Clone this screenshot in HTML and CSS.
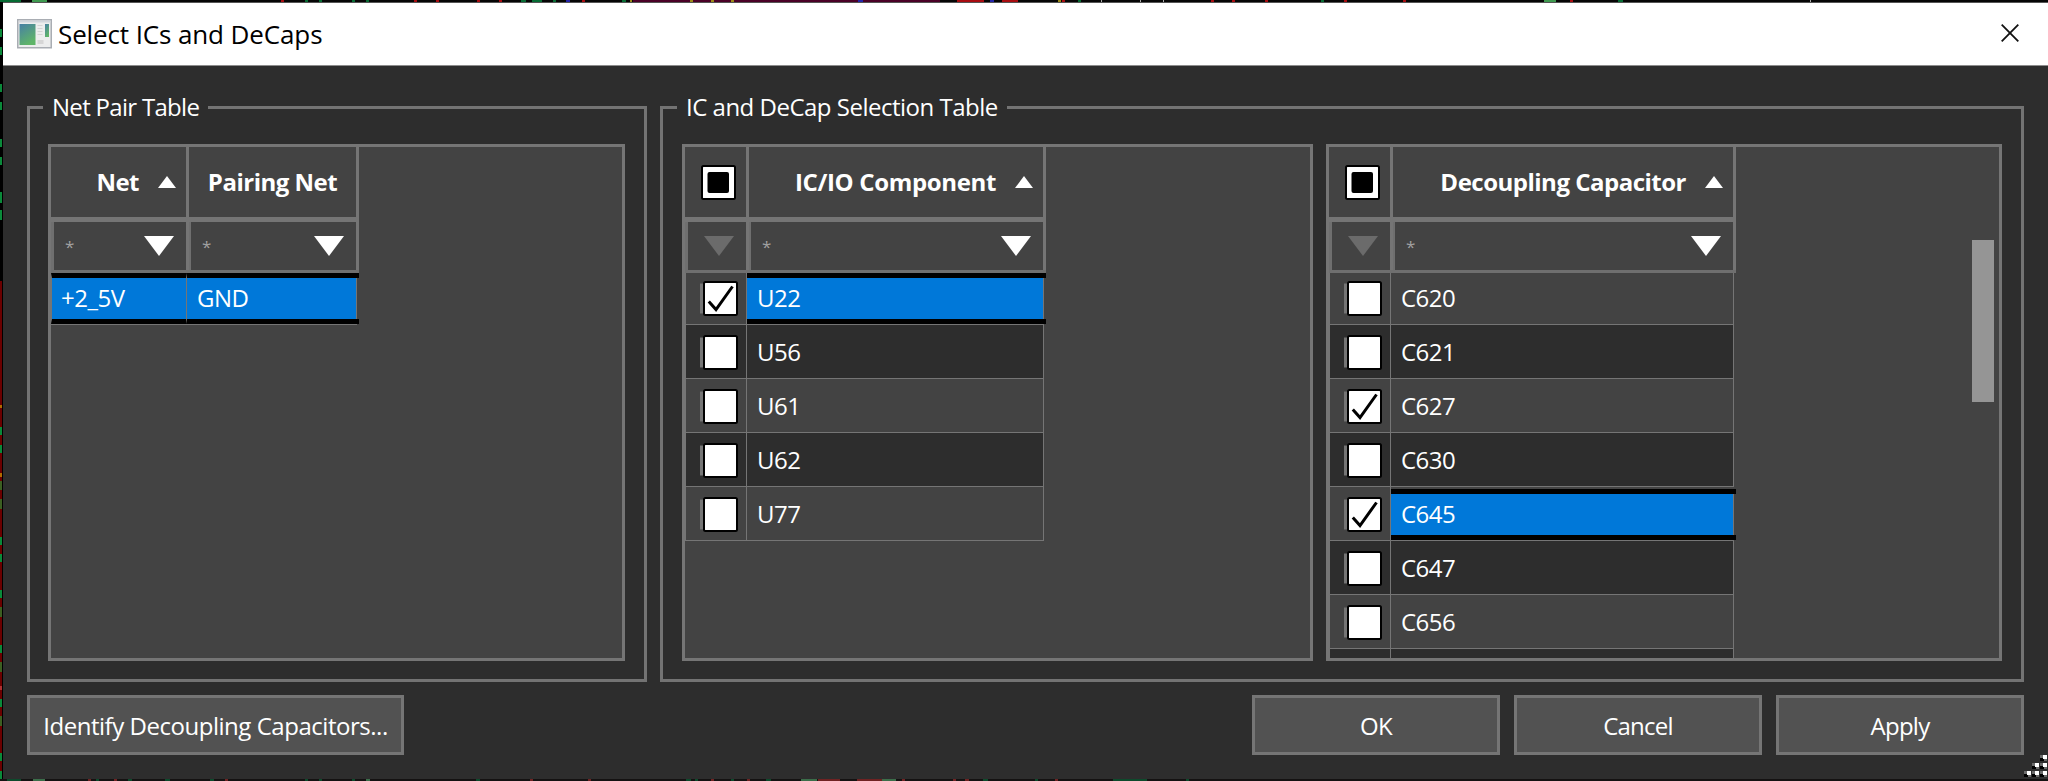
FILE: index.html
```html
<!DOCTYPE html>
<html lang="en">
<head>
    <meta charset="UTF-8">
    <title>Select ICs and DeCaps</title>
    <link rel="stylesheet" href="styles.css">
</head>
<body>
    <!-- shared icons -->
    <svg width="0" height="0" class="defs">
        <symbol id="box" viewBox="0 0 38 35">
            <rect x="0" y="2.5" width="3" height="30" fill="#757575"/>
            <rect x="4" y="1" width="33" height="33" rx="1.5" fill="#fff" stroke="#000" stroke-width="2"/>
        </symbol>
        <symbol id="box-checked" viewBox="0 0 38 35">
            <use href="#box" width="38" height="35"/>
            <path d="M8.8 20.5L16 28.5L32.5 5.5" fill="none" stroke="#000" stroke-width="3"/>
        </symbol>
        <symbol id="box-partial" viewBox="0 0 35 35">
            <rect x="1" y="1" width="33" height="33" rx="1.5" fill="#fff" stroke="#000" stroke-width="2"/>
            <rect x="6.5" y="7" width="21.5" height="21" rx="2" fill="#000"/>
        </symbol>
        <symbol id="sort" viewBox="0 0 18 12"><path d="M9 0L18 12H0Z" fill="#fff"/></symbol>
        <symbol id="down" viewBox="0 0 30 20"><path d="M0 0H30L15 20Z" fill="currentColor"/></symbol>
        <symbol id="dot" viewBox="0 0 7 6">
            <rect x="0" y="0" width="7" height="6" fill="#6b6b6b"/>
            <rect x="0" y="3" width="4" height="3" fill="#000"/>
            <rect x="3" y="0" width="4" height="4" fill="#fff"/>
        </symbol>
    </svg>

    <svg class="strip-top" width="2048" height="3">
        <rect width="2048" height="3" fill="#050505"/>
        <path d="M0 1H21M305 1h3M319 1h3M352 1h3M366 1h3M521 1h5M532 1h10M553 1h3M622 1h4M1078 1h3M1321 1h3M1618 1h5" stroke="#066b33" stroke-width="2"/>
        <path d="M32 1H47M1544 1h12" stroke="#3f9a50" stroke-width="2"/>
        <path d="M633 1H940" stroke="#4a0026" stroke-width="2"/>
        <path d="M281 1h3M414 1h3M436 1h3M477 1h3M499 1h3M582 1h3M957 1h27M1002 1h16M1062 1h3M1211 1h3M1232 1h3M1265 1h3M1344 1h3M1403 1h3M1570 1h3" stroke="#a80c10" stroke-width="2"/>
        <path d="M566 1h4M858 1h5M990 1h4" stroke="#2323a8" stroke-width="2"/>
        <path d="M630 1h2M690 1h3M711 1h3M731 1h3M1058 1h3" stroke="#9c8b18" stroke-width="2"/>
        <path d="M1101 1h1M1140 1h1M1163 1h1M1810 1h1" stroke="#aaa" stroke-width="2"/>
        <path d="M3 2.5H2048" stroke="#555"/>
    </svg>
    <div class="middle">
        <svg class="strip-left" width="3" height="776">
            <rect width="3" height="776" fill="#000"/>
            <rect y="278" width="2" height="498" fill="#6b0000"/>
            <path d="M1 26v8M1 44v8M1 81v8M1 99v8M1 136v8M1 154v8M1 189v11M1 207v10M1 424v8M1 442v8M1 534v8M1 551v8M1 587v8M1 642v8M1 696v8M1 750v8M1 768v8" stroke="#0a8a3a" stroke-width="2"/>
            <path d="M1 478v9M1 496v10M1 604v10M1 659v10M1 713v10" stroke="#3c5f22" stroke-width="2"/>
            <path d="M1 402v3M1 470v4" stroke="#b06a00" stroke-width="2"/>
            <path d="M1 683v4" stroke="#b03030" stroke-width="2"/>
        </svg>

        <div class="window">
            <div class="title-bar">
                <svg width="35" height="30" viewBox="0 0 35 30">
                    <defs>
                        <linearGradient id="screen" x1="0" y1="0" x2="0.5" y2="1">
                            <stop offset="0" stop-color="#477fa5"/>
                            <stop offset="1" stop-color="#5fb568"/>
                        </linearGradient>
                    </defs>
                    <rect x="0.75" y="0.75" width="33.5" height="28" fill="#eceded" stroke="#a9adb3" stroke-width="1.5"/>
                    <path d="M1.5 2.5H33.5" stroke="#d2d6dc" stroke-width="2"/>
                    <rect x="2.5" y="5" width="16" height="21" fill="url(#screen)"/>
                    <path d="M20.5 6.5h5M20.5 9.5h5M20.5 12.5h5M20.5 15.5h5" stroke="#d3d3d3"/>
                    <rect x="20.5" y="21" width="6" height="4" fill="#d6d6d6"/>
                    <rect x="28" y="5" width="4" height="13" fill="url(#screen)"/>
                </svg>
                <span class="title">Select ICs and DeCaps</span>
                <svg class="close" width="18" height="18" viewBox="0 0 18 18"><path d="M0.7 0.7L17.3 17.3M17.3 0.7L0.7 17.3" stroke="#111" stroke-width="1.8"/></svg>
            </div>

            <div class="groups">
                <fieldset class="net-group">
                    <legend class="tight">Net Pair Table</legend>
                    <div class="panel net-table">
                        <div class="row header">
                            <div class="c1"><span class="sorted">Net</span><svg width="18" height="12"><use href="#sort"/></svg></div>
                            <div class="c2 centered"><span>Pairing Net</span></div>
                        </div>
                        <div class="row filter">
                            <div class="c1"><span>*</span><svg width="30" height="20"><use href="#down"/></svg></div>
                            <div class="c2"><span>*</span><svg width="30" height="20"><use href="#down"/></svg></div>
                        </div>
                        <div class="row first">
                            <div class="c1 selected">+2_5V</div>
                            <div class="c2 selected last">GND</div>
                        </div>
                    </div>
                </fieldset>

                <fieldset class="ic-group">
                    <legend>IC and DeCap Selection Table</legend>
                    <div class="panel ic-table">
                        <div class="row header">
                            <div class="c1 check"><svg width="35" height="35"><use href="#box-partial"/></svg></div>
                            <div class="c2"><span class="sorted wide">IC/IO Component</span><svg width="18" height="12"><use href="#sort"/></svg></div>
                        </div>
                        <div class="row filter">
                            <div class="c1 disabled"><svg width="30" height="20"><use href="#down"/></svg></div>
                            <div class="c2"><span>*</span><svg width="30" height="20"><use href="#down"/></svg></div>
                        </div>
                        <div class="row first"><div class="c1 check"><svg width="38" height="35"><use href="#box-checked"/></svg></div><div class="c2 selected last">U22</div></div>
                        <div class="row dark"><div class="c1 check"><svg width="38" height="35"><use href="#box"/></svg></div><div class="c2">U56</div></div>
                        <div class="row"><div class="c1 check"><svg width="38" height="35"><use href="#box"/></svg></div><div class="c2">U61</div></div>
                        <div class="row dark"><div class="c1 check"><svg width="38" height="35"><use href="#box"/></svg></div><div class="c2">U62</div></div>
                        <div class="row"><div class="c1 check"><svg width="38" height="35"><use href="#box"/></svg></div><div class="c2">U77</div></div>
                    </div>

                    <div class="panel cap-table">
                        <div class="row header">
                            <div class="c1 check"><svg width="35" height="35"><use href="#box-partial"/></svg></div>
                            <div class="c2"><span class="sorted">Decoupling Capacitor</span><svg width="18" height="12"><use href="#sort"/></svg></div>
                        </div>
                        <div class="row filter">
                            <div class="c1 disabled"><svg width="30" height="20"><use href="#down"/></svg></div>
                            <div class="c2"><span>*</span><svg width="30" height="20"><use href="#down"/></svg></div>
                        </div>
                        <div class="row first"><div class="c1 check"><svg width="38" height="35"><use href="#box"/></svg></div><div class="c2">C620</div></div>
                        <div class="row dark"><div class="c1 check"><svg width="38" height="35"><use href="#box"/></svg></div><div class="c2">C621</div></div>
                        <div class="row"><div class="c1 check"><svg width="38" height="35"><use href="#box-checked"/></svg></div><div class="c2">C627</div></div>
                        <div class="row dark"><div class="c1 check"><svg width="38" height="35"><use href="#box"/></svg></div><div class="c2">C630</div></div>
                        <div class="row"><div class="c1 check"><svg width="38" height="35"><use href="#box-checked"/></svg></div><div class="c2 selected last">C645</div></div>
                        <div class="row dark"><div class="c1 check"><svg width="38" height="35"><use href="#box"/></svg></div><div class="c2">C647</div></div>
                        <div class="row"><div class="c1 check"><svg width="38" height="35"><use href="#box"/></svg></div><div class="c2">C656</div></div>
                        <div class="row dark"><div class="c1"></div><div class="c2"></div></div>
                        <div class="scroll-thumb"></div>
                    </div>
                </fieldset>
            </div>

            <div class="buttons">
                <button class="identify">Identify Decoupling Capacitors...</button>
                <button>OK</button>
                <button>Cancel</button>
                <button>Apply</button>
            </div>

            <svg class="grip" width="23" height="22">
                <use href="#dot" x="16" y="0" width="7" height="6"/>
                <use href="#dot" x="8" y="8" width="7" height="6"/>
                <use href="#dot" x="16" y="8" width="7" height="6"/>
                <use href="#dot" x="0" y="16" width="7" height="6"/>
                <use href="#dot" x="8" y="16" width="7" height="6"/>
                <use href="#dot" x="16" y="16" width="7" height="6"/>
            </svg>
        </div>
    </div>
    <svg class="strip-bottom" width="2048" height="2">
        <rect width="2048" height="2" fill="#141212"/>
        <path d="M7 1h14M96 1h3M128 1h4M165 1h5M210 1h4M305 1h3M319 1h3M352 1h3M476 1h4M686 1h5M695 1h3M731 1h3M766 1h5M983 1h5M1035 1h3M1113 1h34M1186 1h3" stroke="#0d4a2c" stroke-width="2"/>
        <path d="M33 1h12M366 1h4M801 1h16M882 1h14" stroke="#3b6e4a" stroke-width="2"/>
        <path d="M88 1h3M114 1h3M225 1h3M530 1h3M588 1h3M711 1h3M747 1h3M818 1h22M857 1h25M902 1h3M953 1h3M965 1h4M1055 1h3" stroke="#702222" stroke-width="2"/>
    </svg>
</body>
</html>
```
FILE: styles.css
```css
* {
    box-sizing: border-box;
}
body {
    margin: 0;
    width: 2048px;
    height: 781px;
    overflow: hidden;
    background-color: #000;
    color: #fff;
    font-family: "Open Sans", "Noto Sans", sans-serif;
    font-size: 24px;
    letter-spacing: -0.5px;
}
svg {
    display: block;
    flex: none;
}
.defs {
    position: absolute;
}
.middle {
    display: flex;
    height: 776px;
}
.window {
    position: relative;
    flex: 1;
    background-color: #2d2d2d;
}

/* title bar */
.title-bar {
    display: flex;
    align-items: center;
    height: 63px;
    padding: 0 29px 0 14px;
    background-color: #fff;
    border-bottom: 1px solid #8c8c8c;
    color: #000;
}
.title {
    flex: 1;
    margin-left: 6px;
    padding-bottom: 1px;
    font-size: 26px;
    letter-spacing: -0.12px;
}
.close {
    margin-bottom: 2px;
}

/* group boxes */
.groups {
    display: flex;
    gap: 13px;
    padding: 26px 24px 0;
}
fieldset {
    display: flex;
    gap: 13px;
    height: 590px;
    margin: 0;
    padding: 21px 19px 18px;
    border: 3px solid #737373;
}
.net-group {
    width: 620px;
    padding-left: 18px;
}
.ic-group {
    width: 1364px;
}
legend {
    height: 31px;
    margin-left: -5px;
    padding: 0 9px 2px 9px;
    line-height: 29px;
}
legend.tight {
    letter-spacing: -0.7px;
}

/* tables */
.panel {
    position: relative;
    height: 517px;
    overflow: hidden;
    background-color: #434343;
    border: 3px solid #757575;
}
.net-table {
    --c1: 136px;
    --c2: 170px;
    width: 577px;
}
.ic-table {
    --c1: 62px;
    --c2: 297px;
    width: 631px;
}
.cap-table {
    --c1: 62px;
    --c2: 343px;
    width: 676px;
}
.row {
    display: flex;
    height: 54px;
    width: calc(var(--c1) + var(--c2));
    border-bottom: 1px solid #757575;
}
.row > div {
    display: flex;
    align-items: center;
    padding-left: 10px;
}
.row .c1 {
    flex: none;
    width: var(--c1);
    border-left: 1px solid #757575;
    border-right: 1px solid #757575;
}
.row .c2 {
    flex: none;
    width: var(--c2);
    border-right: 1px solid #757575;
}
.row > .check {
    padding: 1px 0 0 14px;
}
.row.first {
    height: 52px;
}
.row.first > div {
    padding-bottom: 3px;
}
.row.first > .check {
    padding-bottom: 2px;
}
.dark {
    background-color: #2d2d2d;
}

.row > .selected {
    align-self: flex-end;
    height: 51px;
    padding-bottom: 3px;
    border-top: 5px solid #000;
    border-bottom: 5px solid #000;
    background-color: #0078d9;
}
.row > .selected.c1 {
    padding-left: 9px;
    border-left: 1px solid #757575;
}
/* focus bars reach a little past the grid line */
.row > .selected.last {
    width: calc(var(--c2) + 2px);
    border-right: 0;
    background: linear-gradient(#757575, #757575) calc(100% - 2px) 0 / 1px 100% no-repeat,
                linear-gradient(#0078d9, #0078d9) 0 0 / calc(100% - 3px) 100% no-repeat;
    background-origin: padding-box;
    background-clip: padding-box;
}

.row.header,
.row.filter {
    width: calc(var(--c1) + var(--c2) + 2px);
}
.header .c1,
.filter .c1 {
    width: calc(var(--c1) + 2px);
    border-right: 3px solid #757575;
}
.header .c2,
.filter .c2 {
    border-right: 3px solid #757575;
}
.row.header {
    height: 75px;
    border-bottom: 5px solid #757575;
    font-weight: bold;
}
.header > div {
    justify-content: flex-end;
    padding-right: 10px;
}
.header .c1 {
    border-left: 0;
}
.row.header > .check {
    justify-content: flex-start;
    padding: 0 0 0 16px;
}
.header > div.centered {
    justify-content: center;
    padding: 0;
}
.header span {
    padding-bottom: 1px;
}
.header .sorted {
    margin-right: 19px;
}
.header .wide {
    letter-spacing: -0.35px;
}
.row.filter {
    height: 51px;
    border-bottom: 3px solid #6f6f6f;
}
.filter > div {
    justify-content: space-between;
    padding: 0 12px 0 11px;
}
.filter .c1 {
    border-left: 3px solid #6f6f6f;
}
.filter .c2 {
    border-left: 2px solid #6f6f6f;
}
.filter span {
    color: #a0a0a0;
    font-size: 17px;
}
.row.filter > .disabled {
    justify-content: flex-end;
    color: #6b6b6b;
}
.scroll-thumb {
    position: absolute;
    top: 93px;
    right: 5px;
    width: 22px;
    height: 162px;
    background-color: #959595;
}

/* bottom buttons */
.buttons {
    display: flex;
    gap: 14px;
    padding: 13px 24px 0;
}
button {
    width: 248px;
    height: 60px;
    padding: 1px 0 0;
    border: 3px solid #757575;
    background-color: #525252;
    color: #fff;
    font: inherit;
    letter-spacing: -0.75px;
}
.identify {
    width: 377px;
    margin-right: auto;
    letter-spacing: -0.47px;
}
.grip {
    position: absolute;
    right: 1px;
    bottom: 2px;
}
```
